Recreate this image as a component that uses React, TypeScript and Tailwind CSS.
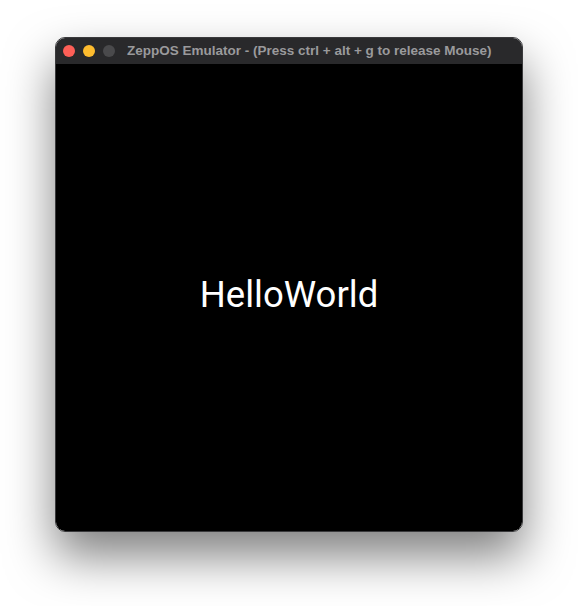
export default function App() {
  return (
    <div className="w-[578px] h-[606px] bg-white pt-[37px] pl-[55px]">
      <div className="w-[468px] rounded-[10px] overflow-hidden border border-[#3a3a3c] shadow-[0_24px_48px_rgba(0,0,0,0.5)]">
        <div className="h-[26px] bg-[#29292b] flex items-center pl-[7px] gap-[8px]">
          <span className="w-[12px] h-[12px] rounded-full bg-[#fe5f57]" />
          <span className="w-[12px] h-[12px] rounded-full bg-[#febc2e]" />
          <span className="w-[12px] h-[12px] rounded-full bg-[#4a4a4c]" />
          <span className="ml-[4px] text-[13.5px] font-bold text-[#9a9a9c] font-['Liberation_Sans',sans-serif] whitespace-nowrap">
            ZeppOS Emulator - (Press ctrl + alt + g to release Mouse)
          </span>
        </div>
        <div className="h-[467px] bg-black flex items-center justify-center">
          <span className="text-white text-[36.5px] font-['Roboto',sans-serif] mt-[-4px]">HelloWorld</span>
        </div>
      </div>
    </div>
  );
}
